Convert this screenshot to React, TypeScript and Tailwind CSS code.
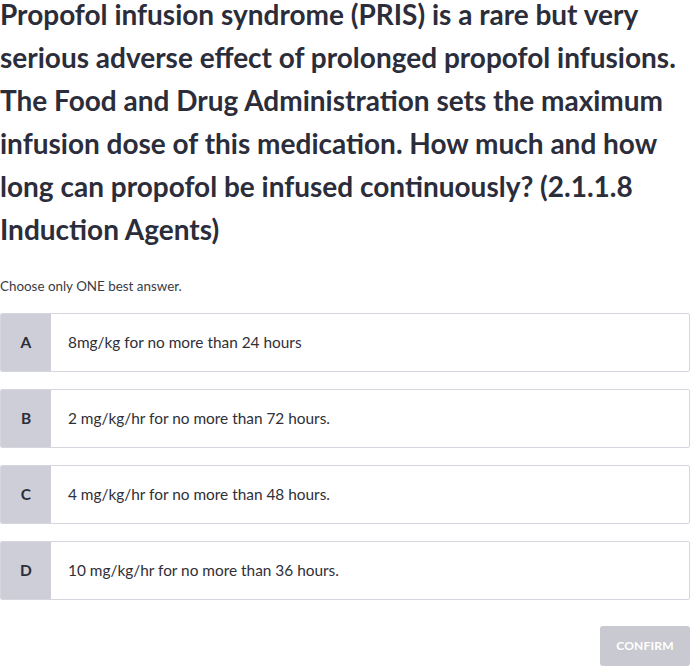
import React from "react";

const options = [
  { letter: "A", text: "8mg/kg for no more than 24 hours" },
  { letter: "B", text: "2 mg/kg/hr for no more than 72 hours." },
  { letter: "C", text: "4 mg/kg/hr for no more than 48 hours." },
  { letter: "D", text: "10 mg/kg/hr for no more than 36 hours." },
];

export default function App() {
  return (
    <div className="w-[700px] h-[672px] bg-white overflow-hidden" style={{ fontFamily: "Lato, 'Noto Sans', sans-serif" }}>
      <div className="w-[690px] pt-[1px]">
        <h1 className="text-[28px] leading-[43px] font-bold text-[#2c2d3a] m-0 -mt-[8px]">
          Propofol infusion syndrome (PRIS) is a rare but very serious adverse effect of prolonged propofol infusions. The Food and Drug Administration sets the maximum infusion dose of this medication. How much and how long can propofol be infused continuously? (2.1.1.8 Induction Agents)
        </h1>
        <p className="mt-[26px] text-[13.4px] leading-[18px] text-[#3a3b45]">Choose only ONE best answer.</p>
        <div className="mt-[18px] flex flex-col gap-[17px]">
          {options.map((o) => (
            <div key={o.letter} className="flex h-[59px] border border-[#d6d7de] rounded-[2px] overflow-hidden">
              <div className="w-[50px] bg-[#cdced8] flex items-center justify-center text-[15.5px] font-bold text-[#2c2d3a]">
                {o.letter}
              </div>
              <div className="flex-1 flex items-center pl-[17px] text-[15.4px] text-[#2f3038]">{o.text}</div>
            </div>
          ))}
        </div>
        <div className="flex justify-end mt-[26px]">
          <button className="w-[90px] h-[40px] rounded-[3px] bg-[#c9cad1] text-white text-[12px] font-bold tracking-[0.2px]">
            CONFIRM
          </button>
        </div>
      </div>
    </div>
  );
}
